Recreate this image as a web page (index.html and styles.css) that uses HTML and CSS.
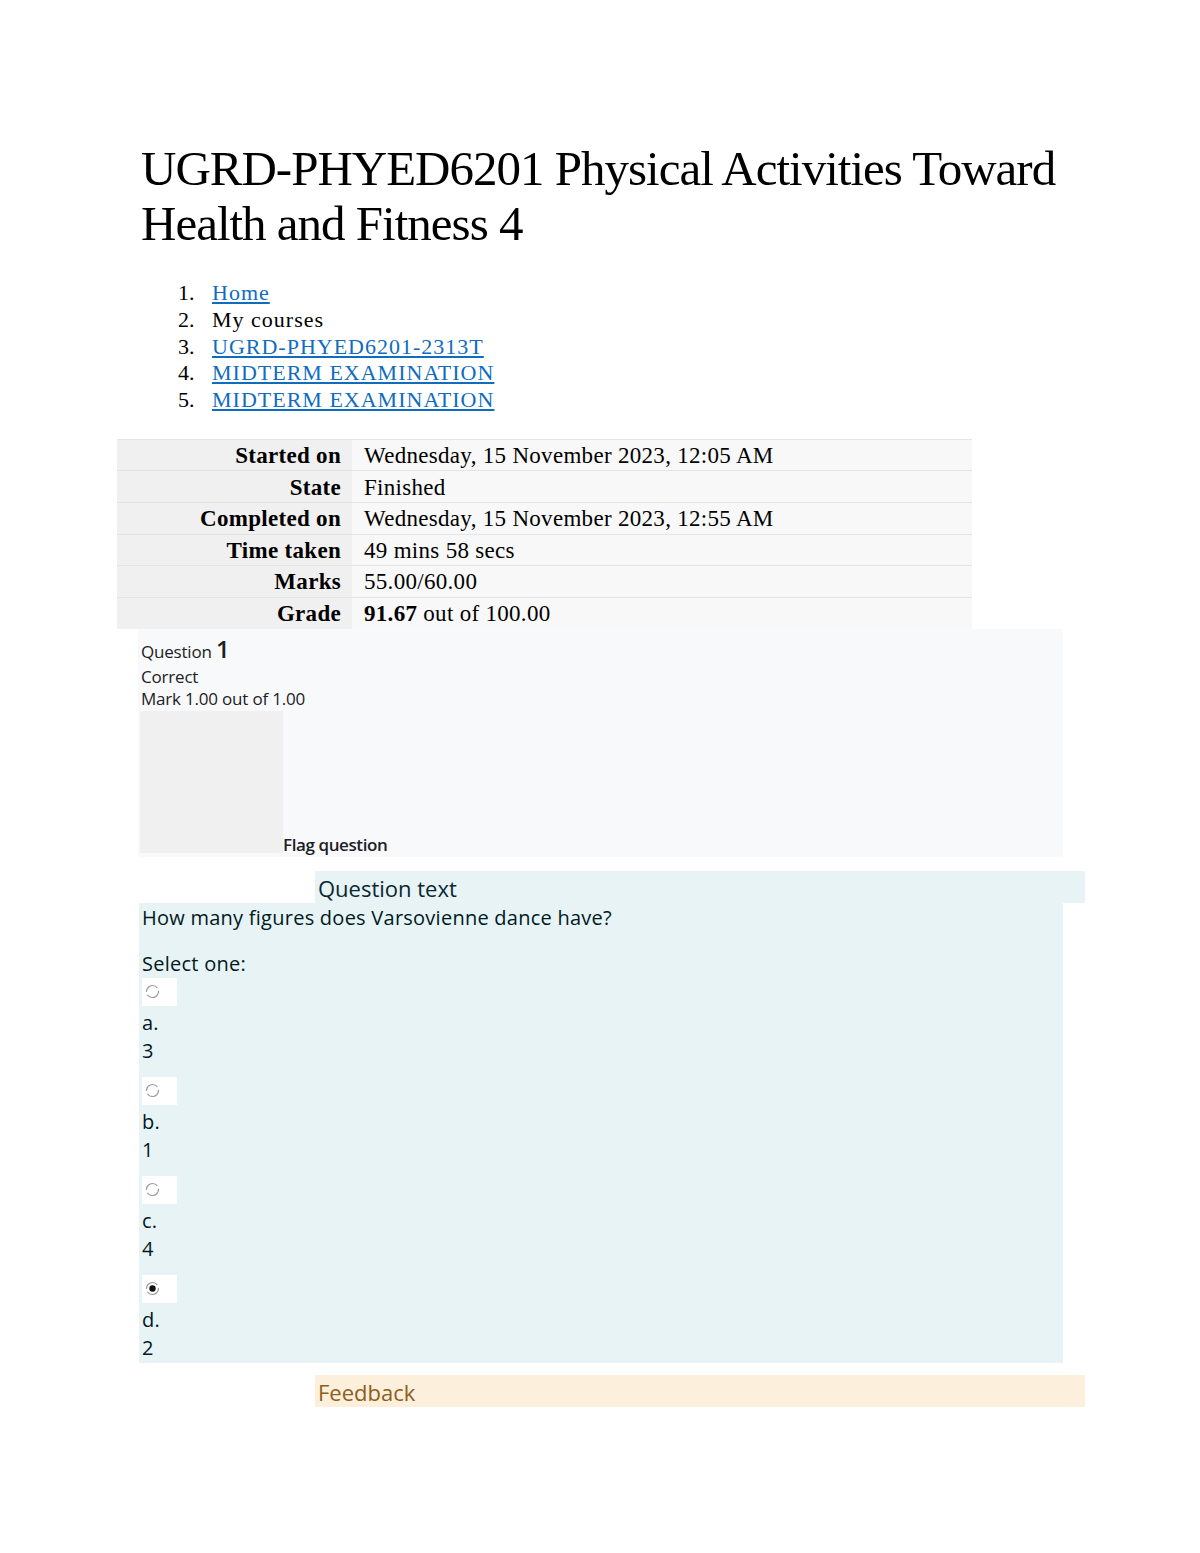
FILE: index.html
```html
<!DOCTYPE html>
<html lang="en">
<head>
<meta charset="utf-8">
<title>UGRD-PHYED6201 Physical Activities Toward Health and Fitness 4</title>
<link rel="stylesheet" href="styles.css">
</head>
<body>
<div class="page">
  <h1 class="title">UGRD-PHYED6201 Physical Activities Toward Health and Fitness 4</h1>
  <ol class="crumbs">
    <li><a href="#">Home</a></li>
    <li>My courses</li>
    <li><a href="#">UGRD-PHYED6201-2313T</a></li>
    <li><a href="#">MIDTERM EXAMINATION</a></li>
    <li><a href="#">MIDTERM EXAMINATION</a></li>
  </ol>

  <table class="summary">
    <tbody>
      <tr><th>Started on</th><td>Wednesday, 15 November 2023, 12:05 AM</td></tr>
      <tr><th>State</th><td>Finished</td></tr>
      <tr><th>Completed on</th><td>Wednesday, 15 November 2023, 12:55 AM</td></tr>
      <tr><th>Time taken</th><td>49 mins 58 secs</td></tr>
      <tr><th>Marks</th><td>55.00/60.00</td></tr>
      <tr><th>Grade</th><td><b>91.67</b> out of 100.00</td></tr>
    </tbody>
  </table>

  <div class="que">
    <div class="info">
      <div class="qno">Question <span class="num">1</span></div>
      <div class="state">Correct</div>
      <div class="grade">Mark 1.00 out of 1.00</div>
      <div class="flag">
        <div class="flag-img"></div>
        <span class="flag-text">Flag question</span>
      </div>
    </div>
  </div>

  <div class="qtext-head">Question text</div>
  <div class="formulation">
    <div class="qtext">How many figures does Varsovienne dance have?</div>
    <div class="prompt">Select one:</div>
    <div class="answer">
      <div class="radio"><svg width="15" height="15" viewBox="0 0 15 15"><circle cx="7.5" cy="7.5" r="6" fill="none" stroke="#9a9a9a" stroke-width="1.2" stroke-dasharray="15 3"/></svg></div>
      <div class="lbl">a.</div>
      <div class="val">3</div>
    </div>
    <div class="answer">
      <div class="radio"><svg width="15" height="15" viewBox="0 0 15 15"><circle cx="7.5" cy="7.5" r="6" fill="none" stroke="#9a9a9a" stroke-width="1.2" stroke-dasharray="15 3"/></svg></div>
      <div class="lbl">b.</div>
      <div class="val">1</div>
    </div>
    <div class="answer">
      <div class="radio"><svg width="15" height="15" viewBox="0 0 15 15"><circle cx="7.5" cy="7.5" r="6" fill="none" stroke="#9a9a9a" stroke-width="1.2" stroke-dasharray="15 3"/></svg></div>
      <div class="lbl">c.</div>
      <div class="val">4</div>
    </div>
    <div class="answer last">
      <div class="radio"><svg width="15" height="15" viewBox="0 0 15 15"><circle cx="7.5" cy="7.5" r="6" fill="none" stroke="#9a9a9a" stroke-width="1.2" stroke-dasharray="15 3"/><circle cx="7.5" cy="7.5" r="3.2" fill="#111"/></svg></div>
      <div class="lbl">d.</div>
      <div class="val">2</div>
    </div>
  </div>
  <div class="feedback-head">Feedback</div>
</div>
</body>
</html>
```

FILE: styles.css
```css
html, body {
  margin: 0;
  padding: 0;
  background: #ffffff;
}

.page {
  padding: 141px 0 0 117px;
  font-family: "Liberation Serif", "Times New Roman", serif;
  color: #000;
}

.title {
  margin: 0 0 0 24px;
  width: 960px;
  font-family: "Liberation Serif", "Times New Roman", serif;
  font-weight: normal;
  font-size: 49px;
  line-height: 55px;
  letter-spacing: -1px;
}

.crumbs {
  margin: 29px 0 0 0;
  padding-left: 61px;
  list-style: none;
  counter-reset: crumb;
  font-size: 22px;
  line-height: 26.75px;
}

.crumbs li {
  counter-increment: crumb;
  letter-spacing: 1px;
}

.crumbs li::before {
  content: counter(crumb) ".";
  display: inline-block;
  width: 34px;
  letter-spacing: 0;
}

.crumbs a {
  color: #0f6cbf;
  text-decoration: underline;
}

.summary {
  margin-top: 25px;
  width: 855px;
  border-collapse: collapse;
  font-size: 23px;
  letter-spacing: 0.3px;
}

.summary tr {
  height: 31.6px;
  border-top: 1px solid #e4e4e4;
}

.summary th {
  width: 224px;
  background: #f0f0f0;
  text-align: right;
  font-weight: bold;
  padding: 2px 11px 0 0;
}

.summary td {
  background: #f8f8f8;
  padding: 2px 0 0 12px;
}

.que {
  margin-left: 21px;
  width: 925px;
  background: #f8f9fa;
  font-family: "Open Sans", "Noto Sans", sans-serif;
  color: #1d2125;
}

.info {
  padding: 7px 0 4px 3px;
  font-size: 17px;
  letter-spacing: -0.2px;
}

.qno {
  line-height: 26px;
}

.qno .num {
  font-size: 24px;
  font-weight: 600;
}

.state, .grade {
  line-height: 22px;
}

.state {
  margin-top: 1px;
}

.flag {
  display: flex;
  align-items: flex-end;
  margin-top: 1px;
}

.flag-img {
  width: 143px;
  height: 142px;
  background: #f0f0f0;
  margin-left: -1px;
}

.flag-text {
  font-size: 17px;
  font-weight: 600;
  line-height: 18px;
  letter-spacing: -0.4px;
  margin-bottom: -1px;
}

.qtext-head {
  margin: 14px 0 0 198px;
  width: 767px;
  height: 32px;
  padding-left: 3px;
  background: #e7f3f5;
  font-family: "Open Sans", "Noto Sans", sans-serif;
  font-size: 22px;
  line-height: 35px;
  color: #0a2730;
}

.formulation {
  margin-left: 22px;
  width: 921px;
  padding: 1px 0 1px 3px;
  background: #e7f3f5;
  font-family: "Open Sans", "Noto Sans", sans-serif;
  font-size: 20px;
  line-height: 28px;
  letter-spacing: 0.25px;
  color: #001a1e;
}

.prompt {
  margin-top: 18px;
}

.answer {
  margin-bottom: 12px;
}

.answer.last {
  margin-bottom: 0;
}

.radio {
  width: 35px;
  height: 28px;
  background: #ffffff;
  display: flex;
  align-items: center;
  padding-left: 3px;
  box-sizing: border-box;
  margin-bottom: 3px;
}

.radio svg {
  display: block;
}

.feedback-head {
  margin: 12px 0 0 198px;
  width: 767px;
  height: 32px;
  padding-left: 3px;
  background: #fcefdc;
  font-family: "Open Sans", "Noto Sans", sans-serif;
  font-size: 22px;
  line-height: 35px;
  color: #8e5d20;
}
```
